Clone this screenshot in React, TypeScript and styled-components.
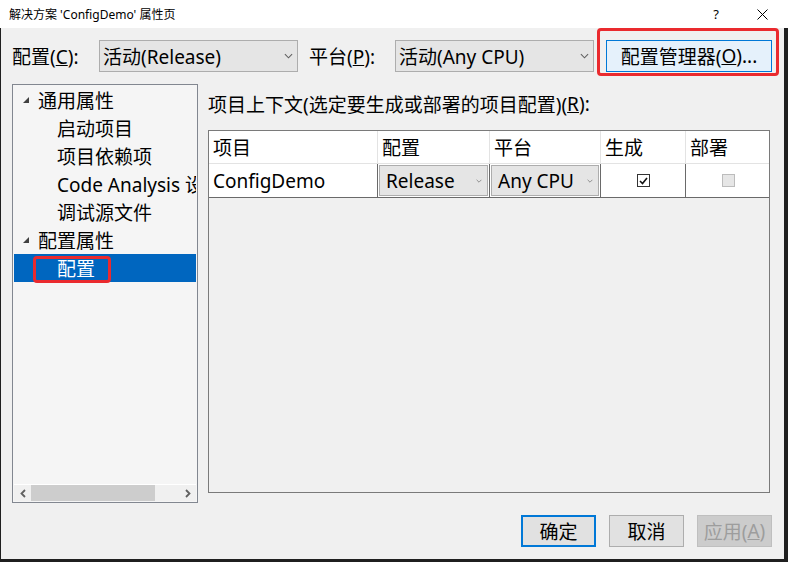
import React from 'react';
import styled, { createGlobalStyle } from 'styled-components';

const FONT = `"Noto Sans", "Noto Sans CJK SC", sans-serif`;
const FS = 19;

const GlobalStyle = createGlobalStyle`
  html, body { margin: 0; padding: 0; background: #1f1f1f; }
  body { font-family: ${FONT}; }
  * { box-sizing: border-box; }
`;

const Window = styled.div`
  width: 788px;
  height: 562px;
  display: flex;
  flex-direction: column;
  background: #1f1f1f;
  overflow: hidden;
  font-family: ${FONT};
  color: #000;
`;

const TitleBar = styled.div`
  height: 28px;
  flex: none;
  background: #fff;
  display: flex;
  align-items: center;
  padding-left: 9px;
  padding-right: 3px;
  font-size: 12px;
`;

const TitleText = styled.span`
  flex: 1;
  white-space: nowrap;
`;

const TitleButton = styled.span`
  width: 46px;
  height: 28px;
  display: flex;
  align-items: center;
  justify-content: center;
  font-size: 13px;
`;

const Body = styled.div`
  flex: 1;
  margin: 0 4px 3px 1px;
  background: #f0f0f0;
  padding: 12px 12px 12px 11px;
  display: flex;
  flex-direction: column;
  gap: 12px;
`;

const TopRow = styled.div`
  height: 32px;
  flex: none;
  display: flex;
  align-items: center;
`;

const Label = styled.span<{ $w: number; $ml?: number }>`
  width: ${p => p.$w}px;
  margin-left: ${p => p.$ml ?? 0}px;
  font-size: ${FS}px;
  white-space: nowrap;
  flex: none;
`;

const Select = styled.div<{ $w: number }>`
  width: ${p => p.$w}px;
  height: 32px;
  flex: none;
  border: 1px solid #adadad;
  background: #e5e5e5;
  display: flex;
  align-items: center;
  justify-content: space-between;
  padding: 0 4px 0 3px;
  font-size: ${FS}px;
  white-space: nowrap;
`;

const PushButton = styled.div`
  position: relative;
  margin-left: 12px;
  width: 166px;
  height: 32px;
  flex: none;
  border: 1px solid #0078d7;
  background: #e5f1fb;
  display: flex;
  align-items: center;
  justify-content: center;
  font-size: ${FS}px;
  white-space: nowrap;
`;

const Annotation = styled.span<{ $t: number; $r: number; $b: number; $l: number }>`
  position: absolute;
  top: ${p => p.$t}px;
  right: ${p => p.$r}px;
  bottom: ${p => p.$b}px;
  left: ${p => p.$l}px;
  border: 3px solid #ea2a2e;
  border-radius: 4px;
  pointer-events: none;
`;

const Main = styled.div`
  height: 419px;
  flex: none;
  display: flex;
  gap: 10px;
`;

const Tree = styled.div`
  width: 186px;
  flex: none;
  border: 1px solid #828790;
  background: #f5f5f5;
  padding: 1px;
  display: flex;
  flex-direction: column;
  overflow: hidden;
`;

const TreeList = styled.div`
  flex: 1;
  overflow: hidden;
`;

const TreeRow = styled.div<{ $level: number; $selected?: boolean }>`
  position: relative;
  height: 28px;
  display: flex;
  align-items: center;
  padding-left: ${p => (p.$level === 1 ? 9 : 43)}px;
  font-size: ${FS}px;
  white-space: nowrap;
  background: ${p => (p.$selected ? '#0066bf' : 'transparent')};
  color: ${p => (p.$selected ? '#fff' : '#000')};
`;

const Expander = styled.svg`
  width: 6px;
  height: 6px;
  margin-right: 9px;
  flex: none;
`;

const HScroll = styled.div`
  height: 17px;
  flex: none;
  border-top: 1px solid #fff;
  background: #f0f0f0;
  display: flex;
  align-items: stretch;
`;

const ScrollArrow = styled.div`
  width: 17px;
  flex: none;
  display: flex;
  align-items: center;
  justify-content: center;
`;

const ScrollThumb = styled.div`
  width: 124px;
  flex: none;
  background: #cdcdcd;
`;

const ScrollTrack = styled.div`
  flex: 1;
`;

const RightPanel = styled.div`
  flex: 1;
  display: flex;
  flex-direction: column;
  margin-right: 2px;
  margin-bottom: 10px;
`;

const ContextLabel = styled.div`
  height: 40px;
  margin-bottom: 6px;
  display: flex;
  align-items: center;
  font-size: ${FS}px;
  white-space: nowrap;
`;

const Table = styled.div`
  flex: 1;
  border: 1px solid #7a7a7a;
  background: #f0f0f0;
  display: grid;
  grid-template-columns: 169px 112px 111px 85px 1fr;
  grid-template-rows: 33px 34px;
  align-content: start;
`;

const HeadCell = styled.div`
  background: #fff;
  border-right: 1px solid #e3e3e3;
  border-bottom: 1px solid #e3e3e3;
  display: flex;
  align-items: center;
  padding-left: 4px;
  font-size: ${FS}px;
  &:nth-child(5) { border-right: none; }
`;

const Cell = styled.div<{ $center?: boolean; $pad?: boolean }>`
  background: #fff;
  border-right: 1px solid #6a6a6a;
  border-bottom: 1px solid #6a6a6a;
  display: flex;
  align-items: center;
  justify-content: ${p => (p.$center ? 'center' : 'flex-start')};
  padding: ${p => (p.$pad ? '1px' : '0 0 0 4px')};
  font-size: ${FS}px;
  &:last-child { border-right: none; }
`;

const Combo = styled.div`
  flex: 1;
  align-self: stretch;
  border: 1px solid #adadad;
  background: #e5e5e5;
  display: flex;
  align-items: center;
  justify-content: space-between;
  padding: 0 5px 0 6px;
  font-size: ${FS}px;
  white-space: nowrap;
`;

const CheckBox = styled.div<{ $disabled?: boolean }>`
  width: 13px;
  height: 13px;
  margin-left: -3px;
  border: 1px solid ${p => (p.$disabled ? '#bcbcbc' : '#333')};
  background: ${p => (p.$disabled ? '#e6e6e6' : '#fff')};
  display: flex;
  align-items: center;
  justify-content: center;
`;

const Footer = styled.div`
  height: 32px;
  flex: none;
  display: flex;
  justify-content: flex-end;
  gap: 13px;
`;

const DialogButton = styled.div<{ $variant?: 'default' | 'normal' | 'disabled' }>`
  width: 75px;
  height: 32px;
  display: flex;
  align-items: center;
  justify-content: center;
  font-size: ${FS}px;
  white-space: nowrap;
  background: ${p => (p.$variant === 'disabled' ? '#cccccc' : '#e1e1e1')};
  border: ${p =>
    p.$variant === 'default'
      ? '2px solid #0078d7'
      : p.$variant === 'disabled'
      ? '1px solid #bfbfbf'
      : '1px solid #adadad'};
  color: ${p => (p.$variant === 'disabled' ? '#9d9d9d' : '#000')};
`;

const Chevron = ({ size = 9, color = '#606060' }: { size?: number; color?: string }) => (
  <svg width={size} height={Math.ceil(size / 2) + 1} viewBox="0 0 10 6">
    <polyline points="1,1 5,5 9,1" fill="none" stroke={color} strokeWidth="1.2" />
  </svg>
);

const ExpandGlyph = () => (
  <Expander viewBox="0 0 6 6">
    <polygon points="6,0 6,6 0,6" fill="#404040" />
  </Expander>
);

export default function App() {
  return (
    <>
      <GlobalStyle />
      <Window>
        <TitleBar>
          <TitleText>解决方案 'ConfigDemo' 属性页</TitleText>
          <TitleButton>?</TitleButton>
          <TitleButton>
            <svg width="11" height="11" viewBox="0 0 11 11">
              <path d="M0.5 0.5 L10.5 10.5 M10.5 0.5 L0.5 10.5" stroke="#000" strokeWidth="1" />
            </svg>
          </TitleButton>
        </TitleBar>
        <Body>
          <TopRow>
            <Label $w={87}>配置(<u>C</u>):</Label>
            <Select $w={199}>
              <span>活动(Release)</span>
              <Chevron />
            </Select>
            <Label $w={86} $ml={11}>平台(<u>P</u>):</Label>
            <Select $w={199}>
              <span>活动(Any CPU)</span>
              <Chevron />
            </Select>
            <PushButton>
              配置管理器(<u>O</u>)...
              <Annotation $t={-13} $r={-8} $b={-5} $l={-10} />
            </PushButton>
          </TopRow>
          <Main>
            <Tree>
              <TreeList>
                <TreeRow $level={1}>
                  <ExpandGlyph />
                  通用属性
                </TreeRow>
                <TreeRow $level={2}>启动项目</TreeRow>
                <TreeRow $level={2}>项目依赖项</TreeRow>
                <TreeRow $level={2}>Code Analysis 设置</TreeRow>
                <TreeRow $level={2}>调试源文件</TreeRow>
                <TreeRow $level={1}>
                  <ExpandGlyph />
                  配置属性
                </TreeRow>
                <TreeRow $level={2} $selected>
                  配置
                  <Annotation $t={2} $r={85} $b={-1} $l={19} />
                </TreeRow>
              </TreeList>
              <HScroll>
                <ScrollArrow>
                  <svg width="6" height="9" viewBox="0 0 6 9">
                    <polyline points="5,1 1.5,4.5 5,8" fill="none" stroke="#606060" strokeWidth="1.8" />
                  </svg>
                </ScrollArrow>
                <ScrollThumb />
                <ScrollTrack />
                <ScrollArrow>
                  <svg width="6" height="9" viewBox="0 0 6 9">
                    <polyline points="1,1 4.5,4.5 1,8" fill="none" stroke="#606060" strokeWidth="1.8" />
                  </svg>
                </ScrollArrow>
              </HScroll>
            </Tree>
            <RightPanel>
              <ContextLabel>项目上下文(选定要生成或部署的项目配置)(<u>R</u>):</ContextLabel>
              <Table>
                <HeadCell>项目</HeadCell>
                <HeadCell>配置</HeadCell>
                <HeadCell>平台</HeadCell>
                <HeadCell>生成</HeadCell>
                <HeadCell>部署</HeadCell>
                <Cell>ConfigDemo</Cell>
                <Cell $pad>
                  <Combo>
                    <span>Release</span>
                    <Chevron size={6} color="#707070" />
                  </Combo>
                </Cell>
                <Cell $pad>
                  <Combo>
                    <span>Any CPU</span>
                    <Chevron size={6} color="#707070" />
                  </Combo>
                </Cell>
                <Cell $center>
                  <CheckBox>
                    <svg width="9" height="8" viewBox="0 0 9 8">
                      <polyline points="1,4 3.5,6.5 8,1" fill="none" stroke="#111" strokeWidth="1.6" />
                    </svg>
                  </CheckBox>
                </Cell>
                <Cell $center>
                  <CheckBox $disabled />
                </Cell>
              </Table>
            </RightPanel>
          </Main>
          <Footer>
            <DialogButton $variant="default">确定</DialogButton>
            <DialogButton $variant="normal">取消</DialogButton>
            <DialogButton $variant="disabled">应用(<u>A</u>)</DialogButton>
          </Footer>
        </Body>
      </Window>
    </>
  );
}
